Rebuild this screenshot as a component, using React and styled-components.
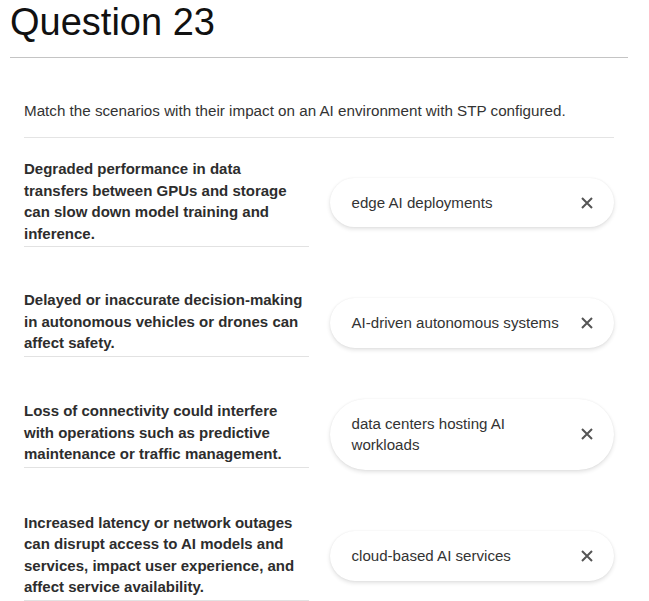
import styled, { createGlobalStyle } from 'styled-components';

const GlobalStyle = createGlobalStyle`
    body {
        margin: 0;
        background: #fff;
        font-family: "Liberation Sans", Arial, sans-serif;
        color: #333;
    }
`;

const Page = styled.div`
    padding: 0 21px 0 10px;
`;

const Title = styled.h1`
    margin: 0;
    padding-bottom: 13px;
    border-bottom: 1px solid #c4c4c4;
    font-size: 38px;
    font-weight: 300;
    line-height: 44px;
    color: #111;
`;

const Body = styled.div`
    padding: 42px 14px 0 14px;
`;

const Prompt = styled.p`
    margin: 0;
    padding-bottom: 16px;
    border-bottom: 1px solid #e4e4e4;
    font-size: 15.2px;
    line-height: 21px;
    color: #333;
`;

const Rows = styled.div`
    display: flex;
    flex-direction: column;
    gap: 42px;
    padding-top: 20px;
`;

const Row = styled.div`
    display: grid;
    grid-template-columns: 1fr 1fr;
    column-gap: 21px;
    align-items: center;
`;

const Scenario = styled.div`
    padding-bottom: 2px;
    border-bottom: 1px solid #e2e2e2;
    font-size: 15px;
    font-weight: 700;
    line-height: 21.5px;
    color: #2d2d2d;
`;

const Chip = styled.div`
    display: flex;
    align-items: center;
    gap: 16px;
    padding: 14px 21px 14px 22px;
    border-radius: 36px;
    background: #fff;
    box-shadow: 0 2px 4px rgba(0, 0, 0, 0.12), 0 0 2px rgba(0, 0, 0, 0.06);
`;

const ChipText = styled.span`
    flex: 1;
    font-size: 15.1px;
    line-height: 21.5px;
    color: #333;
`;

const Remove = styled.button`
    display: flex;
    padding: 0;
    border: 0;
    background: none;
    cursor: pointer;
    color: #555;
`;

const closeIcon = (
    <svg width="12" height="12" viewBox="0 0 12 12" fill="none" stroke="currentColor" strokeWidth="2">
        <path d="M1 1l10 10M11 1L1 11" />
    </svg>
);

const items = [
    {
        scenario: 'Degraded performance in data transfers between GPUs and storage can slow down model training and inference.',
        answer: 'edge AI deployments',
    },
    {
        scenario: 'Delayed or inaccurate decision-making in autonomous vehicles or drones can affect safety.',
        answer: 'AI-driven autonomous systems',
    },
    {
        scenario: 'Loss of connectivity could interfere with operations such as predictive maintenance or traffic management.',
        answer: 'data centers hosting AI workloads',
    },
    {
        scenario: 'Increased latency or network outages can disrupt access to AI models and services, impact user experience, and affect service availability.',
        answer: 'cloud-based AI services',
    },
];

const App = () => {
    return (
        <Page>
            <GlobalStyle />
            <Title>Question 23</Title>
            <Body>
                <Prompt>Match the scenarios with their impact on an AI environment with STP configured.</Prompt>
                <Rows>
                    {items.map((item) => (
                        <Row key={item.answer}>
                            <Scenario>{item.scenario}</Scenario>
                            <Chip>
                                <ChipText>{item.answer}</ChipText>
                                <Remove aria-label="Remove">{closeIcon}</Remove>
                            </Chip>
                        </Row>
                    ))}
                </Rows>
            </Body>
        </Page>
    );
}

export default App;
